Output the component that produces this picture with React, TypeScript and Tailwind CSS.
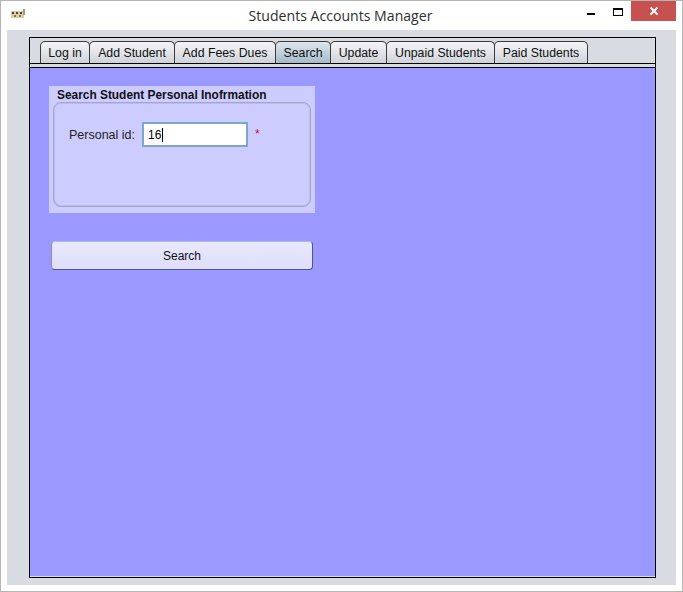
const font = { fontFamily: '"Liberation Sans", Arial, sans-serif' }

const tabs = [
  { label: 'Log in', width: 'w-[50px]' },
  { label: 'Add Student', width: 'w-[86px]' },
  { label: 'Add Fees Dues', width: 'w-[102px]' },
  { label: 'Search', width: 'w-[56px]', active: true },
  { label: 'Update', width: 'w-[57px]' },
  { label: 'Unpaid Students', width: 'w-[109px]' },
  { label: 'Paid Students', width: 'w-[94px]' },
]

function AppIcon() {
  return (
    <svg width="14" height="9" viewBox="0 0 14 9" className="block">
      <rect x="0" y="2" width="13" height="7" fill="#d8cfa6" />
      <rect x="1" y="3" width="2" height="2" fill="#4a4330" />
      <rect x="5" y="3" width="2" height="2" fill="#4a4330" />
      <rect x="9" y="3" width="2" height="2" fill="#4a4330" />
      <rect x="3" y="6" width="2" height="2" fill="#8a7f58" />
      <rect x="8" y="6" width="2" height="2" fill="#8a7f58" />
      <rect x="12" y="0" width="2" height="6" fill="#a89c70" />
    </svg>
  )
}

function TitleBar() {
  return (
    <div className="relative flex h-[29px] items-center justify-center bg-white">
      <div className="absolute left-[10px] top-[8px]">
        <AppIcon />
      </div>
      <span className="mt-[1px] mr-[2px] text-[14.1px] text-[#2f2f2f]" style={{ fontFamily: '"Open Sans", "Noto Sans", sans-serif' }}>
        Students Accounts Manager
      </span>
      <div className="absolute right-[87px] top-[12px] h-[2px] w-[8px] bg-black" />
      <div className="absolute right-[59px] top-[7px] h-[8px] w-[10px] border border-t-2 border-black" />
      <div className="absolute right-[6px] top-0 flex h-[20px] w-[45px] items-center justify-center bg-[#c75050]">
        <svg width="10" height="10" viewBox="0 0 10 10">
          <path d="M1.5 1.5 L8.5 8.5 M8.5 1.5 L1.5 8.5" stroke="white" strokeWidth="2" />
        </svg>
      </div>
    </div>
  )
}

function TabStrip() {
  return (
    <div className="flex h-[26px] items-end border-b border-black bg-[#d8dce2] pl-[10px]">
      {tabs.map((tab) => (
        <div
          key={tab.label}
          className={`flex h-[22px] items-center justify-center rounded-t-[5px] border border-b-0 border-[#3c3c3c] pt-[2px] text-[12.3px] text-[#111] -mr-px ${tab.width} ${
            tab.active
              ? 'bg-gradient-to-b from-[#dfe5ea] to-[#a3bccd]'
              : 'bg-gradient-to-b from-[#f4f5f7] to-[#cfd3d9]'
          }`}
        >
          {tab.label}
        </div>
      ))}
    </div>
  )
}

function SearchPanel() {
  return (
    <div className="w-[266px] bg-[#ccccff] px-[4px] pb-[6px]">
      <div className="h-[16px] pl-[4px] text-[11.9px] font-bold leading-[18px] text-[#111]">
        Search Student Personal Inofrmation
      </div>
      <div className="flex h-[105px] items-start rounded-[8px] border border-[#a4a4cc] pl-[15px] pt-[19px] shadow-[inset_0_0_0_1px_#bcbce8]">
        <span className="mt-[4px] text-[12.5px] text-[#222]">Personal id:</span>
        <div className="ml-[7px] flex h-[25px] w-[106px] items-center border-2 border-[#7ea6c8] bg-white pl-[4px] text-[12px] text-black">
          16
          <span className="ml-px h-[14px] w-px bg-black" />
        </div>
        <span className="ml-[7px] mt-[3px] text-[12px] text-[#c0104a]">*</span>
      </div>
    </div>
  )
}

export default function App() {
  return (
    <div className="h-[592px] w-[683px] overflow-hidden border border-[#b5b5b5] bg-white" style={font}>
      <TitleBar />
      <div className="mx-[6px] h-[555px] bg-[#d8dce2] px-[22px] pt-[7px]">
        <div className="h-[541px] w-[627px] border border-black bg-[#d8dce2]">
          <TabStrip />
          <div className="h-[4px] border-b border-black bg-[#d8dce2]" />
          <div className="h-[508px] bg-[#9999ff] pl-[19px] pt-[18px]">
            <SearchPanel />
            <button className="ml-[2px] mt-[28px] block h-[29px] w-[262px] rounded-[4px] border border-[#55557a] border-t-[#b8b8dc] border-l-[#9090b0] bg-gradient-to-b from-[#e8e8ff] to-[#dedefa] text-[12px] text-[#111]">
              Search
            </button>
          </div>
        </div>
      </div>
    </div>
  )
}
